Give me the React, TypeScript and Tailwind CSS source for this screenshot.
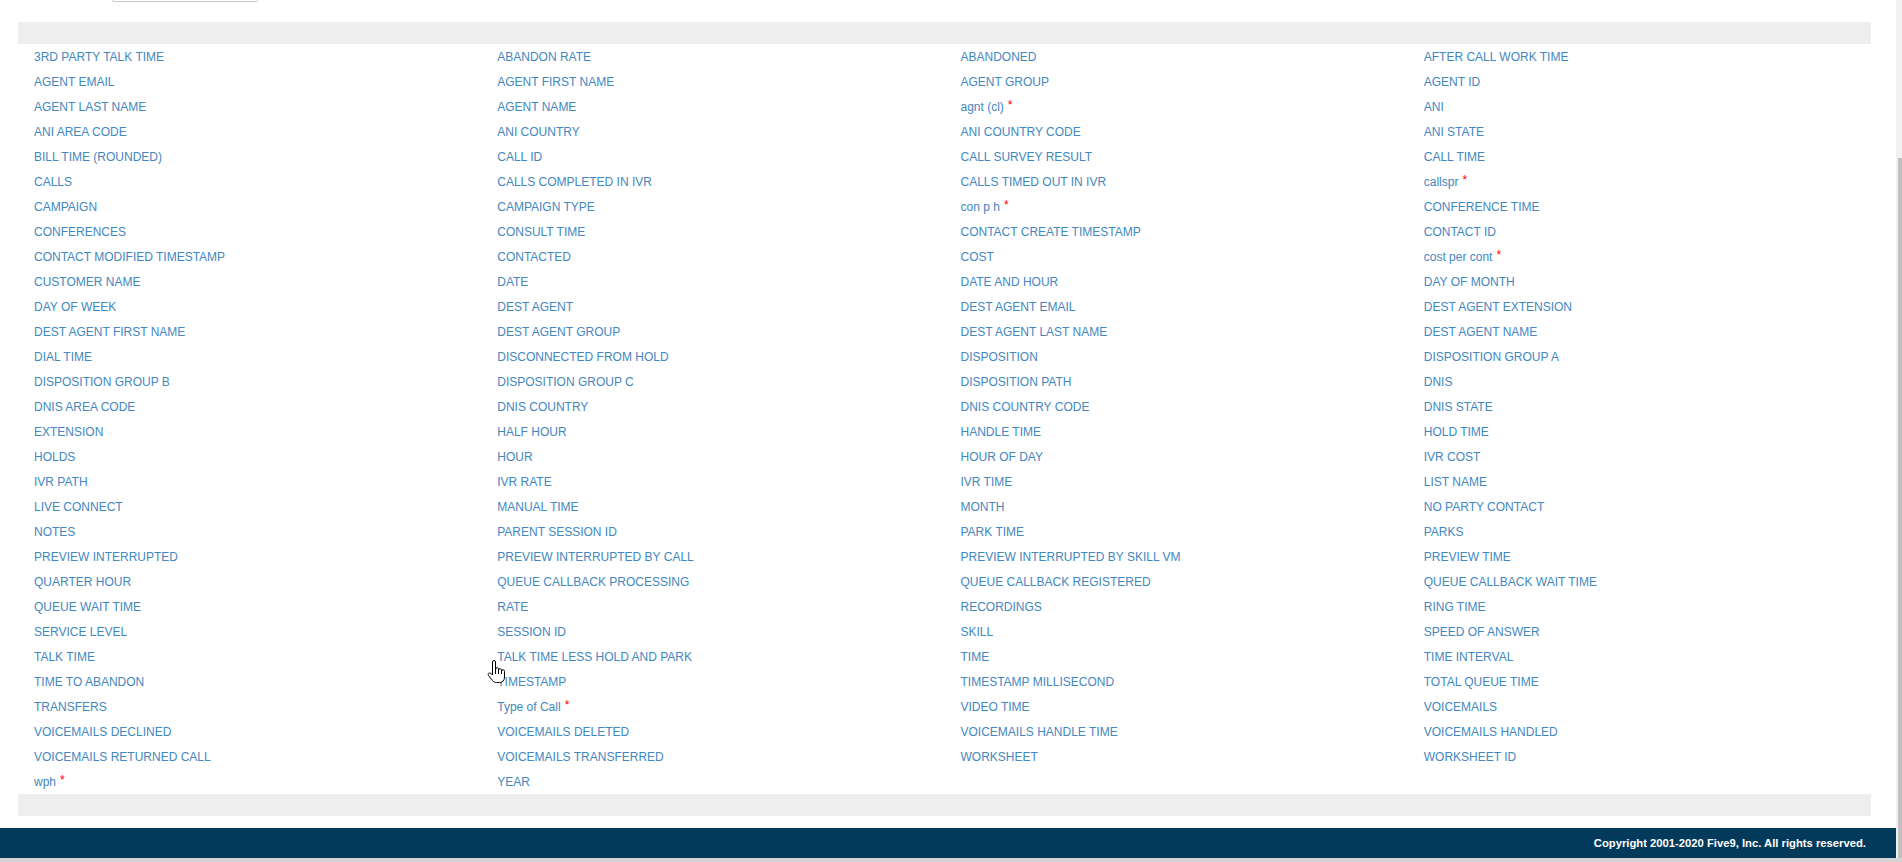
const fields: string[] = [
  "3RD PARTY TALK TIME", "ABANDON RATE", "ABANDONED", "AFTER CALL WORK TIME",
  "AGENT EMAIL", "AGENT FIRST NAME", "AGENT GROUP", "AGENT ID",
  "AGENT LAST NAME", "AGENT NAME", "agnt (cl)*", "ANI",
  "ANI AREA CODE", "ANI COUNTRY", "ANI COUNTRY CODE", "ANI STATE",
  "BILL TIME (ROUNDED)", "CALL ID", "CALL SURVEY RESULT", "CALL TIME",
  "CALLS", "CALLS COMPLETED IN IVR", "CALLS TIMED OUT IN IVR", "callspr*",
  "CAMPAIGN", "CAMPAIGN TYPE", "con p h*", "CONFERENCE TIME",
  "CONFERENCES", "CONSULT TIME", "CONTACT CREATE TIMESTAMP", "CONTACT ID",
  "CONTACT MODIFIED TIMESTAMP", "CONTACTED", "COST", "cost per cont*",
  "CUSTOMER NAME", "DATE", "DATE AND HOUR", "DAY OF MONTH",
  "DAY OF WEEK", "DEST AGENT", "DEST AGENT EMAIL", "DEST AGENT EXTENSION",
  "DEST AGENT FIRST NAME", "DEST AGENT GROUP", "DEST AGENT LAST NAME", "DEST AGENT NAME",
  "DIAL TIME", "DISCONNECTED FROM HOLD", "DISPOSITION", "DISPOSITION GROUP A",
  "DISPOSITION GROUP B", "DISPOSITION GROUP C", "DISPOSITION PATH", "DNIS",
  "DNIS AREA CODE", "DNIS COUNTRY", "DNIS COUNTRY CODE", "DNIS STATE",
  "EXTENSION", "HALF HOUR", "HANDLE TIME", "HOLD TIME",
  "HOLDS", "HOUR", "HOUR OF DAY", "IVR COST",
  "IVR PATH", "IVR RATE", "IVR TIME", "LIST NAME",
  "LIVE CONNECT", "MANUAL TIME", "MONTH", "NO PARTY CONTACT",
  "NOTES", "PARENT SESSION ID", "PARK TIME", "PARKS",
  "PREVIEW INTERRUPTED", "PREVIEW INTERRUPTED BY CALL", "PREVIEW INTERRUPTED BY SKILL VM", "PREVIEW TIME",
  "QUARTER HOUR", "QUEUE CALLBACK PROCESSING", "QUEUE CALLBACK REGISTERED", "QUEUE CALLBACK WAIT TIME",
  "QUEUE WAIT TIME", "RATE", "RECORDINGS", "RING TIME",
  "SERVICE LEVEL", "SESSION ID", "SKILL", "SPEED OF ANSWER",
  "TALK TIME", "TALK TIME LESS HOLD AND PARK", "TIME", "TIME INTERVAL",
  "TIME TO ABANDON", "TIMESTAMP", "TIMESTAMP MILLISECOND", "TOTAL QUEUE TIME",
  "TRANSFERS", "Type of Call*", "VIDEO TIME", "VOICEMAILS",
  "VOICEMAILS DECLINED", "VOICEMAILS DELETED", "VOICEMAILS HANDLE TIME", "VOICEMAILS HANDLED",
  "VOICEMAILS RETURNED CALL", "VOICEMAILS TRANSFERRED", "WORKSHEET", "WORKSHEET ID",
  "wph*", "YEAR",
];

function Field({ name }: { name: string }) {
  // custom fields carry a trailing * in the list
  const custom = name.endsWith("*");
  const label = custom ? name.slice(0, -1) : name;
  return (
    <div className="pl-4 h-[25px] leading-[27px] truncate">
      <a className="text-[#4387c0] cursor-pointer">{label}</a>
      {custom && <span className="ml-1 text-[#ff0000] relative -top-[2px]">*</span>}
    </div>
  );
}

function HandCursor() {
  return (
    <svg
      className="absolute left-[487px] top-[659px]"
      width="19"
      height="25"
      viewBox="0 0 19 25"
    >
      <path
        d="M5.5 3 A1.5 1.5 0 0 1 8.5 3 V10 A1.5 1.5 0 0 1 11.5 10.5 V11 A1.5 1.5 0 0 1 14.5 11.5 V12 A1.5 1.5 0 0 1 17.5 12.5 V18 C17.5 21.5 15.5 23.5 12.5 23.5 H9.5 C7.5 23.5 6.5 22.5 5.5 21.5 L1.5 16.5 A1.6 1.6 0 0 1 3.8 14.3 L5.5 16 Z"
        fill="#fff"
        stroke="#000"
        strokeWidth="1"
        strokeLinejoin="round"
      />
      <path d="M8.5 10 V15 M11.5 11 V15 M14.5 12 V15" stroke="#000" strokeWidth="1" />
    </svg>
  );
}

export default function App() {
  return (
    <div className="relative h-[862px] w-[1902px] overflow-hidden bg-white font-['Liberation_Sans',Arial,sans-serif] text-[12px] flex flex-col">
      <div className="flex flex-1 min-h-0">
        <div className="flex-1 flex flex-col">
          <div className="h-[2px] ml-[112px] w-[146px] border-x border-b border-[#cccccc] rounded-b-[4px]" />
          <div className="ml-[18px] mr-[25px] mt-[20px]">
            <div className="h-[22px] bg-[#eeeeee]" />
            <div className="grid grid-cols-4">
              {fields.map((f) => (
                <Field key={f} name={f} />
              ))}
            </div>
            <div className="h-[22px] bg-[#eeeeee]" />
          </div>
          <div className="flex-1" />
          <footer className="h-[30px] bg-[#023a5c] flex items-center justify-end pr-[30px]">
            <span className="text-white font-bold text-[11.25px]">
              Copyright 2001-2020 Five9, Inc. All rights reserved.
            </span>
          </footer>
        </div>
        <div className="w-[6px] bg-[#f1f1f1] flex flex-col">
          <div className="h-[158px]" />
          <div className="flex-1 ml-[2px] bg-[#c1c1c1]" />
        </div>
      </div>
      <div className="h-[4px] bg-[#d4d4d4]" />
      <HandCursor />
    </div>
  );
}
